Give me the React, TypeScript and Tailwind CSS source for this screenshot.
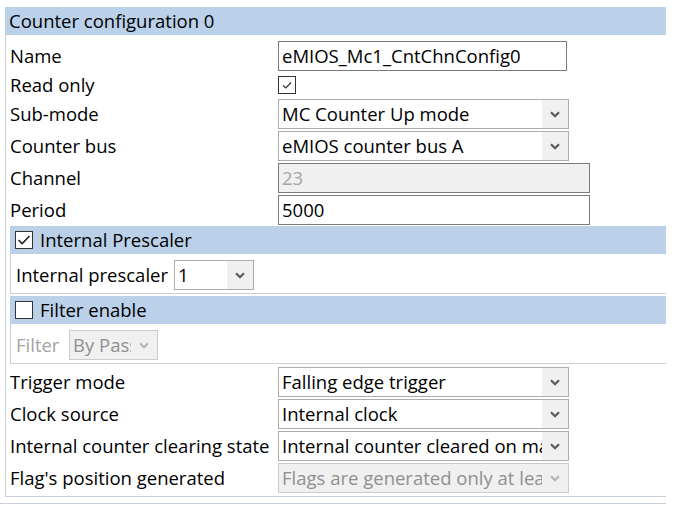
import React from "react";

function Chevron({ color }: { color: string }) {
  return (
    <svg width="10" height="7" viewBox="0 0 10 7" fill="none">
      <path d="M1 1.2 L5 5.2 L9 1.2" stroke={color} strokeWidth="2.2" />
    </svg>
  );
}

function Select({
  text,
  widthClass,
  disabled,
}: {
  text: string;
  widthClass: string;
  disabled?: boolean;
}) {
  return (
    <div
      className={
        "flex h-[30px] border " +
        widthClass +
        (disabled
          ? " border-[#cccccc] bg-[#f0f0f0] text-[#8f8f8f]"
          : " border-[#adadad] bg-white text-black")
      }
    >
      <div className="flex-1 overflow-hidden whitespace-nowrap pl-[3px] leading-[28px]">
        {text}
      </div>
      <div className="flex w-[26px] shrink-0 items-center justify-center bg-[#f0f0f0]">
        <Chevron color={disabled ? "#b5b5b5" : "#5a5a5a"} />
      </div>
    </div>
  );
}

function CheckBox({ checked, big }: { checked: boolean; big?: boolean }) {
  return (
    <div className="flex h-[18px] w-[18px] items-center justify-center border border-[#333333] bg-white">
      {checked &&
        (big ? (
          <svg width="14" height="12" viewBox="0 0 14 12" fill="none">
            <path d="M1.5 6 L5.2 9.6 L12.5 2" stroke="#222" strokeWidth="1.6" />
          </svg>
        ) : (
          <svg width="12" height="10" viewBox="0 0 12 10" fill="none">
            <path d="M2 5.5 L4.8 8 L10 2.5" stroke="#333" strokeWidth="1.2" />
          </svg>
        ))}
    </div>
  );
}

function Row({
  label,
  children,
  className,
}: {
  label: string;
  children: React.ReactNode;
  className: string;
}) {
  return (
    <div className={"flex items-center " + className}>
      <div className="w-[268px] shrink-0 whitespace-nowrap">{label}</div>
      {children}
    </div>
  );
}

export default function App() {
  return (
    <div
      className="relative h-[509px] w-[674px] overflow-hidden bg-white text-[18.5px] text-black"
      style={{ fontFamily: "'Open Sans', 'Noto Sans', sans-serif" }}
    >
      <div className="w-[661px] pl-0 pt-[7px] ml-[5px]">
        <div className="h-[28px] bg-[#bad1e9] pl-[4px] leading-[28px] whitespace-nowrap">
          Counter configuration 0
        </div>
        <div className="border-b border-l border-[#c8cfd6] pl-[4px] pt-[6px] pb-[3px]">
          <Row label="Name" className="h-[30px]">
            <div className="h-[30px] w-[289px] border border-[#7a7a7a] pl-[3px] leading-[28px] whitespace-nowrap">
              eMIOS_Mc1_CntChnConfig0
            </div>
          </Row>
          <Row label="Read only" className="h-[28px]">
            <CheckBox checked />
          </Row>
          <Row label="Sub-mode" className="h-[30px]">
            <Select text="MC Counter Up mode" widthClass="w-[291px]" />
          </Row>
          <Row label="Counter bus" className="mt-[2px] h-[30px]">
            <Select text="eMIOS counter bus A" widthClass="w-[291px]" />
          </Row>
          <Row label="Channel" className="mt-[2px] h-[30px]">
            <div className="h-[30px] w-[312px] border border-[#7a7a7a] bg-[#f0f0f0] pl-[3px] leading-[28px] text-[#a6a6a6]">
              23
            </div>
          </Row>
          <Row label="Period" className="mt-[2px] h-[30px]">
            <div className="h-[30px] w-[312px] border border-[#7a7a7a] bg-white pl-[3px] leading-[28px]">
              5000
            </div>
          </Row>

          {/* Internal Prescaler section */}
          <div className="mt-[1px]">
            <div className="flex h-[28px] items-center bg-[#bad1e9] pl-[5px]">
              <CheckBox checked big />
              <span className="ml-[7px] whitespace-nowrap">Internal Prescaler</span>
            </div>
            <div className="flex items-center border-b border-l border-[#c8cfd6] pl-[5px] pt-[6px] pb-[3px]">
              <div className="w-[158px] shrink-0 whitespace-nowrap">Internal prescaler</div>
              <Select text="1" widthClass="w-[80px]" />
            </div>
          </div>

          {/* Filter section */}
          <div className="mt-[2px]">
            <div className="flex h-[28px] items-center bg-[#bad1e9] pl-[5px]">
              <CheckBox checked={false} />
              <span className="ml-[7px] whitespace-nowrap">Filter enable</span>
            </div>
            <div className="flex items-center border-b border-l border-[#c8cfd6] pl-[5px] pt-[6px] pb-[3px]">
              <div className="w-[53px] shrink-0 whitespace-nowrap text-[#a3a3a3]">Filter</div>
              <Select text="By Pass" widthClass="w-[89px]" disabled />
            </div>
          </div>

          <Row label="Trigger mode" className="mt-[3px] h-[30px]">
            <Select text="Falling edge trigger" widthClass="w-[291px]" />
          </Row>
          <Row label="Clock source" className="mt-[2px] h-[30px]">
            <Select text="Internal clock" widthClass="w-[291px]" />
          </Row>
          <Row label="Internal counter clearing state" className="mt-[2px] h-[30px]">
            <Select text="Internal counter cleared on match" widthClass="w-[291px]" />
          </Row>
          <Row label="Flag's position generated" className="mt-[2px] h-[30px]">
            <Select text="Flags are generated only at leading edge" widthClass="w-[291px]" disabled />
          </Row>
        </div>
      </div>
      <div className="mt-[6px] h-px w-[666px] bg-[#c8cfd6]" />
    </div>
  );
}
